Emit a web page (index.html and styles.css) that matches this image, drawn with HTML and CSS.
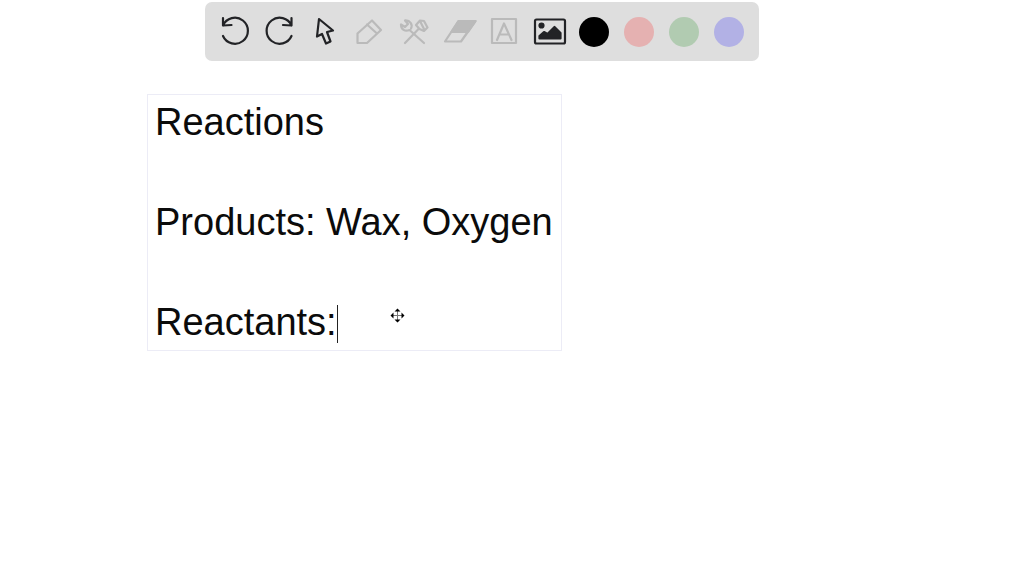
FILE: index.html
```html
<!DOCTYPE html>
<html lang="en">
  <head>
    <meta charset="UTF-8" />
    <meta name="viewport" content="width=device-width, initial-scale=1.0" />
    <title>Whiteboard</title>
    <link rel="stylesheet" href="styles.css">
  </head>
  <body>
    <div class="toolbar" role="toolbar" aria-label="Drawing tools">
      <button class="tool" type="button" aria-label="Undo">
        <svg viewBox="0 0 45 45"><path d="M11 9v7.500l8.500-.5M11 16.500A13 13 0 1 1 11 27"/></svg>
      </button>
      <button class="tool" type="button" aria-label="Redo">
        <svg viewBox="0 0 45 45"><path d="M34.500 9v7.500l-8.500-.5M34.500 16.500A13 13 0 1 0 34.500 27"/></svg>
      </button>
      <button class="tool" type="button" aria-label="Select">
        <svg viewBox="0 0 45 45"><path d="M17 10L31 21.500 25 23 28.500 32.500 24 34.500 20 25 15 27.500Z"/></svg>
      </button>
      <button class="tool faded" type="button" aria-label="Pen">
        <svg viewBox="0 0 45 45"><path d="M10.500 34V24.500L25 11.500 34 21 20 34ZM20 15.500l10 9"/></svg>
      </button>
      <button class="tool faded" type="button" aria-label="Tools">
        <svg viewBox="0 0 45 45">
          <path d="M13 11.500l3 3.500-3 3-4-2.500c0 5 4 7.500 8.500 5.500L32 34M13 11.500c5-.5 8 4 6 8"/>
          <path d="M13 34L27 19.500M24 16L28 11.500 32 12 35.500 18.500 32 22 27.500 20ZM28.500 13l3.500 7"/>
        </svg>
      </button>
      <button class="tool faded" type="button" aria-label="Eraser">
        <svg viewBox="0 0 45 45"><path d="M8 32.500L21.500 12H38.500L24 32.500Z"/><path class="solid" d="M14.500 23L21.500 12H38.500L31 23Z"/></svg>
      </button>
      <button class="tool faded" type="button" aria-label="Text">
        <svg viewBox="0 0 45 45"><path d="M10 10h24v24h-24ZM15 31L22 14.500 29.500 31M17.500 25.500h9.500"/></svg>
      </button>
      <button class="tool" type="button" aria-label="Image">
        <svg viewBox="0 0 45 45">
          <rect x="8" y="10.500" width="30" height="24" rx="1.500"/>
          <circle class="solid" cx="14.500" cy="16.500" r="2"/>
          <path class="solid" d="M12.500 29.500V27L17 23 20.500 25 27.500 18 33.500 24V29.500Z"/>
        </svg>
      </button>
      <button class="tool" type="button" aria-label="Black"><span class="swatch black"></span></button>
      <button class="tool" type="button" aria-label="Red"><span class="swatch red"></span></button>
      <button class="tool" type="button" aria-label="Green"><span class="swatch green"></span></button>
      <button class="tool" type="button" aria-label="Blue"><span class="swatch blue"></span></button>
    </div>

    <main class="board">
      <div class="note">
        <textarea class="note-text" rows="5" aria-label="Note" spellcheck="false">Reactions

Products: Wax, Oxygen

Reactants:</textarea>
        <span class="caret"></span>
        <svg class="pointer" viewBox="0 0 15 15">
          <path class="pointer-line" d="M7.500 2v11M2 7.500h11"/>
          <path d="M7.500 0.500l3 3h-6ZM7.500 14.500l3-3h-6ZM0.500 7.500l3-3v6ZM14.500 7.500l-3-3v6Z"/>
        </svg>
      </div>
    </main>
  </body>
</html>
```

FILE: styles.css
```css
body {
  margin: 0;
  min-height: 100vh;
  background-color: #fff;
  font-family: Arial, "Liberation Sans", sans-serif;
}
.toolbar {
  display: flex;
  width: fit-content;
  margin: 2px 0 0 20%;
  padding: 7px;
  border-radius: 7px;
  background-color: #dedede;
}
.tool {
  display: flex;
  align-items: center;
  justify-content: center;
  width: 45px;
  height: 45px;
  padding: 0;
  border: 0;
  background: none;
  color: #222326;
  cursor: pointer;
}
.tool svg {
  width: 45px;
  height: 45px;
  fill: none;
  stroke: currentColor;
  stroke-width: 2.2;
  stroke-linejoin: round;
  stroke-linecap: round;
}
.tool .solid {
  fill: currentColor;
}
.faded {
  color: #bababa;
}
.swatch {
  width: 30px;
  height: 30px;
  border-radius: 50%;
}
.black {
  background-color: #000;
}
.red {
  background-color: #e5b1b1;
}
.green {
  background-color: #b1cbb1;
}
.blue {
  background-color: #b2b1e5;
}
.board {
  padding: 33px 0 0 147px;
}
.note {
  position: relative;
  width: fit-content;
}
.note-text {
  display: block;
  box-sizing: border-box;
  width: 415px;
  padding: 2px 4px 3px 7px;
  border: 1px solid #ececf6;
  outline: none;
  resize: none;
  overflow: hidden;
  background: none;
  color: #0b0b0b;
  caret-color: transparent;
  font: 38px/50px Arial, "Liberation Sans", sans-serif;
}
/* text cursor after the last line */
.caret {
  position: absolute;
  left: 190px;
  bottom: 8px;
  width: 1px;
  height: 38px;
  background-color: #222;
}
.pointer {
  position: absolute;
  left: 243px;
  top: 214px;
  width: 15px;
  height: 15px;
}
.pointer-line {
  stroke: #777;
}
```
